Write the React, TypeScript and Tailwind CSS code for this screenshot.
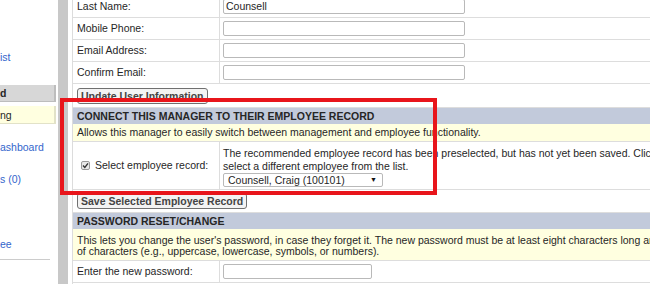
import React from "react";

type FieldProps = {
  label: string;
  value?: string;
  inputWidth?: string;
};

const Field = ({ label, value, inputWidth = "w-[242px]" }: FieldProps) => (
  <div className="flex h-[22px] border-b border-[#dddddd]">
    <div className="w-[147px] shrink-0 border-r border-[#dddddd] pl-[4px] flex items-center">{label}</div>
    <div className="flex items-center pl-[3px]">
      <div className={`${inputWidth} h-[15px] border border-[#b9b9b9] rounded-[2px] px-[2px] leading-[13px] bg-white`}>{value}</div>
    </div>
  </div>
);

const Button = ({ children }: { children: React.ReactNode }) => (
  <div className="inline-flex h-[16px] items-center px-[3px] border border-[#707070] rounded-[3px] bg-[#f3f3f3] font-bold text-[#444] leading-[14px] whitespace-nowrap">
    {children}
  </div>
);

const SectionHeader = ({ title }: { title: string }) => (
  <div className="border-t border-[#dddddd] bg-[#c2cadb] h-[17px] pl-[4px] font-bold leading-[17px] whitespace-nowrap">{title}</div>
);

const Sidebar = () => (
  <div className="w-[58px] shrink-0 overflow-hidden flex flex-col whitespace-nowrap">
    <div className="mt-[51px] h-[12px] leading-[12px] text-[#3366cc]">ist</div>
    <div className="mt-[22px] h-[17px] leading-[17px] w-[56px] bg-[#d7d7d7] border-r-2 border-b border-[#bdbdbd] font-bold">d</div>
    <div className="mt-[4px] h-[18px] leading-[18px] w-[56px] bg-[#ffffe0] border-r-2 border-b border-[#e2e2c8]">ng</div>
    <div className="mt-[17px] h-[12px] leading-[12px] text-[#3366cc]">ashboard</div>
    <div className="mt-[20px] h-[12px] leading-[12px] text-[#3366cc]">s (0)</div>
    <div className="mt-[53px] h-[12px] leading-[12px] text-[#3366cc]">ee</div>
    <div className="mt-[9px] h-[1px] w-[50px] bg-[#cccccc]" />
  </div>
);

export default function App() {
  return (
    <div className="relative w-[650px] h-[284px] overflow-hidden bg-white font-['Liberation_Sans',Arial,sans-serif] text-[10.5px] text-[#262626] flex">
      <Sidebar />
      <div className="w-[10px] shrink-0 bg-[#c8c8c8]" />
      <div className="w-[4px] shrink-0" />
      <main className="flex-1 min-w-0 border-l border-[#dcdcdc] -mt-[4px]">
        <Field label="Last Name:" value="Counsell" />
        <Field label="Mobile Phone:" />
        <Field label="Email Address:" />
        <Field label="Confirm Email:" />

        <div className="h-[23px] pt-[4px] pl-[4px]">
          <Button>Update User Information</Button>
        </div>

        <SectionHeader title="CONNECT THIS MANAGER TO THEIR EMPLOYEE RECORD" />
        <div className="h-[18px] bg-[#ffffe0] border-b border-[#dddddd] pl-[4px] leading-[17px] whitespace-nowrap">
          Allows this manager to easily switch between management and employee functionality.
        </div>
        <div className="flex h-[48px] border-b border-[#dddddd]">
          <div className="w-[147px] shrink-0 border-r border-[#dddddd] pl-[8px] flex items-center gap-[5px]">
            <span className="w-[9px] h-[9px] border border-[#9a9a9a] rounded-[2px] bg-[#e9e9e9] flex items-center justify-center">
              <svg width="7" height="7" viewBox="0 0 7 7">
                <path d="M1 3.6 L2.8 5.4 L6 1.4" stroke="#333" strokeWidth="1.4" fill="none" />
              </svg>
            </span>
            <span>Select employee record:</span>
          </div>
          <div className="pl-[3px] pt-[5px] leading-[13px] whitespace-nowrap">
            <div>The recommended employee record has been preselected, but has not yet been saved. Click the save button below or</div>
            <div>select a different employee from the list.</div>
            <div className="w-[160px] h-[14px] border border-[#b9b9b9] rounded-[2px] flex items-center justify-between pl-[4px] pr-[5px] bg-white leading-[12px]">
              <span>Counsell, Craig (100101)</span>
              <span className="text-[7px] text-[#111]">▼</span>
            </div>
          </div>
        </div>

        <div className="h-[22px] pt-[3px] pl-[4px]">
          <Button>Save Selected Employee Record</Button>
        </div>

        <SectionHeader title="PASSWORD RESET/CHANGE" />
        <div className="bg-[#ffffe0] border-b border-[#dddddd] pl-[4px] pt-[6px] pb-[3px] leading-[11px] whitespace-nowrap">
          <div>This lets you change the user's password, in case they forget it. The new password must be at least eight characters long and contain a variety</div>
          <div>of characters (e.g., uppercase, lowercase, symbols, or numbers).</div>
        </div>
        <Field label="Enter the new password:" inputWidth="w-[149px]" />
      </main>
      <div className="absolute left-[60px] top-[98px] w-[377px] h-[97px] border-4 border-[#e8151b] pointer-events-none" />
    </div>
  );
}
